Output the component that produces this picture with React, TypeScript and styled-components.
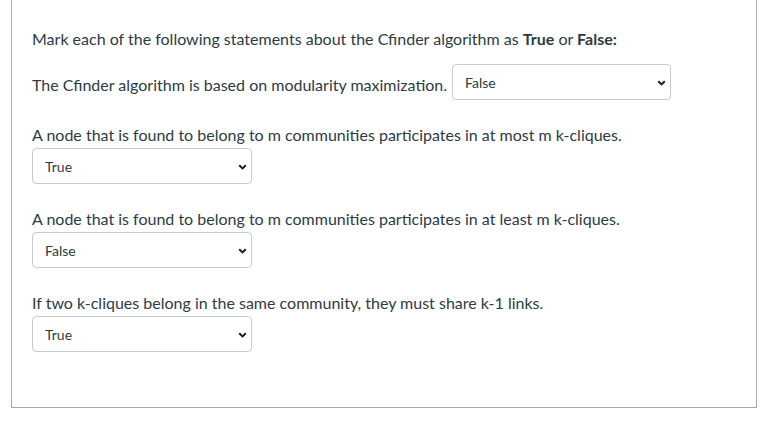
import styled, { createGlobalStyle } from "styled-components";

const GlobalStyle = createGlobalStyle`
  html, body {
    margin: 0;
    padding: 0;
    background: #fff;
  }
  body {
    font-family: Lato, "Open Sans", "Liberation Sans", sans-serif;
    color: #2d3b45;
  }
`

const Panel = styled.div`
  margin-left: 11px;
  width: 746px;
  height: 408px;
  box-sizing: border-box;
  border: 1px solid #a9a9a9;
  border-top: none;
  padding: 28px 20px 0 20px;
`

const Intro = styled.p`
  margin: 0 0 14px 0;
  font-size: 16px;
  line-height: 22px;
  strong {
    font-weight: 700;
  }
`

const Statement = styled.div`
  display: flex;
  flex-wrap: wrap;
  align-items: flex-end;
  column-gap: 5px;
  margin-bottom: 24px;
  font-size: 16px;
  line-height: 22px;
`

// inline rows sit the text a little above the select's bottom edge
const Text = styled.span<{ $inline?: boolean }>`
  margin-bottom: ${p => (p.$inline ? 4 : 2)}px;
`

const SelectWrap = styled.span<{ $width: number }>`
  position: relative;
  display: inline-block;
  width: ${p => p.$width}px;
  height: 36px;
`

const Select = styled.select`
  appearance: none;
  -webkit-appearance: none;
  display: block;
  width: 100%;
  height: 36px;
  box-sizing: border-box;
  border: 1px solid #c7cdd1;
  border-radius: 4px;
  background: #fff;
  padding: 0 28px 0 12px;
  font-family: Lato, "Open Sans", "Liberation Sans", sans-serif;
  font-size: 14px;
  color: #2d3b45;
  outline: none;
`

const Chevron = styled.svg`
  position: absolute;
  right: 5px;
  top: 16px;
  width: 9px;
  height: 6px;
  pointer-events: none;
`

function Dropdown({ value, width }: { value: string; width: number }) {
  return (
    <SelectWrap $width={width}>
      <Select defaultValue={value}>
        <option value="">[ Select ]</option>
        <option value="True">True</option>
        <option value="False">False</option>
      </Select>
      <Chevron viewBox="0 0 9 6">
        <path d="M1.2 1.2 L4.5 4.4 L7.8 1.2" fill="none" stroke="#1f1f1f" strokeWidth="2.1" />
      </Chevron>
    </SelectWrap>
  )
}

const statements = [
  { text: "The Cfinder algorithm is based on modularity maximization.", value: "False", inline: true },
  { text: "A node that is found to belong to m communities participates in at most m k-cliques.", value: "True" },
  { text: "A node that is found to belong to m communities participates in at least m k-cliques.", value: "False" },
  { text: "If two k-cliques belong in the same community, they must share k-1 links.", value: "True" },
]

export default function App() {
  return (
    <>
      <GlobalStyle />
      <Panel>
        <Intro>
          Mark each of the following statements about the Cfinder algorithm as <strong>True</strong> or <strong>False:</strong>
        </Intro>
        {statements.map((s, i) => (
          <Statement key={i}>
            <Text $inline={s.inline}>{s.text}</Text>
            <Dropdown value={s.value} width={s.inline ? 219 : 220} />
          </Statement>
        ))}
      </Panel>
    </>
  )
}
